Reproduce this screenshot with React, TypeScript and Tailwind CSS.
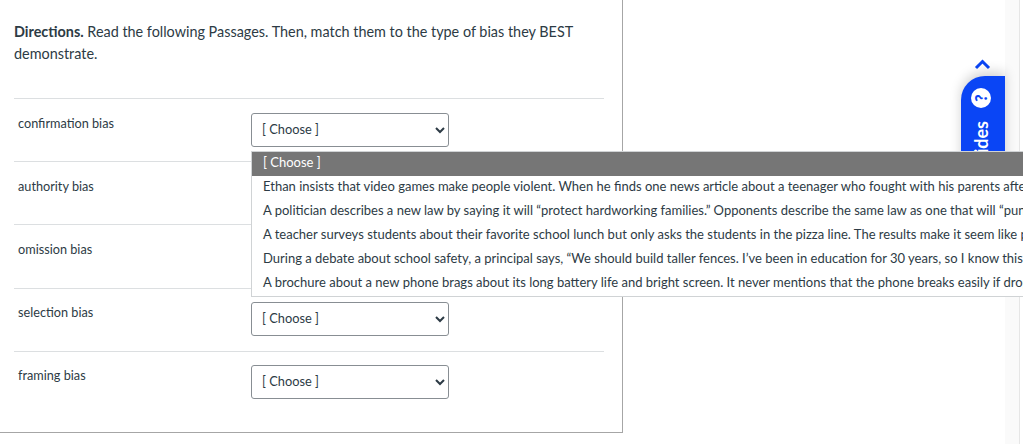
const OPTIONS = [
  'Ethan insists that video games make people violent. When he finds one news article about a teenager who fought with his parents after playing a game, he shares it widely.',
  'A politician describes a new law by saying it will “protect hardworking families.” Opponents describe the same law as one that will “punish small businesses.”',
  'A teacher surveys students about their favorite school lunch but only asks the students in the pizza line. The results make it seem like pizza is the favorite of everyone.',
  'During a debate about school safety, a principal says, “We should build taller fences. I’ve been in education for 30 years, so I know this is the right answer.”',
  'A brochure about a new phone brags about its long battery life and bright screen. It never mentions that the phone breaks easily if dropped on a hard floor.',
]

const ROWS = ['confirmation bias', 'authority bias', 'omission bias', 'selection bias', 'framing bias']

function Row({ label }: { label: string }) {
  return (
    <div className="flex h-[63.2px] border-t border-[#dcdfe1] pl-1">
      <div className="w-[233px] pt-[14.5px] text-[12.7px] leading-[18px] text-[#2d3b45]">{label}</div>
      <select className="mt-[13.6px] h-[34px] w-[198px] rounded-[3px] border border-[#888e93] bg-white pb-[2px] pl-[6px] text-[12.8px] text-[#2d3b45]">
        <option>[ Choose ]</option>
      </select>
    </div>
  )
}

export default function App() {
  return (
    <div className="relative flex h-[444px] w-[1023px] overflow-hidden bg-white font-['Lato','Liberation_Sans',sans-serif]">
      <div className="h-[433px] w-[623px] shrink-0 border-r border-b border-[#a6a6a6] pt-[21px]">
        <p className="w-[590px] pl-[14px] text-[14.4px] leading-[22px] text-[#2d3b45]">
          <strong>Directions.</strong> Read the following Passages. Then, match them to the type of bias they BEST demonstrate.
        </p>
        <div className="mt-[33px] ml-[14px] w-[590px]">
          {ROWS.map(r => <Row key={r} label={r} />)}
        </div>
      </div>

      <div className="flex-1" />
      {/* Right gutter */}
      <div className="h-full w-[15px] shrink-0 border-r border-[#e6e6e6] bg-[#fafafa]" />
      <div className="w-[3px] shrink-0" />

      {/* Guides tab */}
      <svg className="absolute top-[58px] left-[974px] h-[12px] w-[17px]" viewBox="0 0 17 12" fill="none">
        <path d="M2 10L8.5 3.5L15 10" stroke="#0a45f5" strokeWidth="3" />
      </svg>
      <div className="absolute top-[76px] left-[961px] flex h-[140px] w-[44px] flex-col items-center overflow-hidden rounded-tl-[24px] bg-[#0a45f5] pt-[12px] pr-[4px] text-white shadow-[0_-4px_12px_rgba(0,0,0,0.18)]">
        <div className="flex h-[20px] w-[20px] -rotate-90 items-center justify-center rounded-full bg-white text-[16px] leading-none font-black text-[#0a45f5]">?</div>
        <div className="mt-[13px] rotate-180 text-[18px] leading-none font-bold [writing-mode:vertical-rl]">Guides</div>
      </div>

      {/* Open select list */}
      <div className="absolute top-[151px] left-[251px] z-10 w-[800px] border border-[#d0d3d5] bg-white text-[13px] leading-[21px] text-[#2d3b45]">
        <div className="h-[24px] bg-[#767676] pl-[11px] text-white">[ Choose ]</div>
        {OPTIONS.map(o => (
          <div key={o} className="h-[24px] overflow-hidden pl-[11px] whitespace-nowrap">{o}</div>
        ))}
      </div>
    </div>
  )
}
